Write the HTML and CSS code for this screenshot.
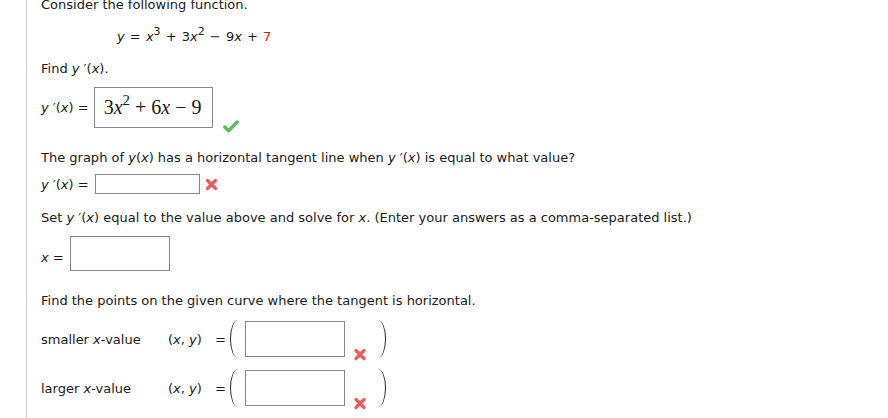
FILE: index.html
```html
<!DOCTYPE html>
<html>
<head>
<meta charset="utf-8">
<link rel="stylesheet" href="styles.css">
</head>
<body>
<div class="page">
  <div class="line l1">Consider the following function.</div>
  <div class="line eq"><i>y</i> = <i>x</i><sup>3</sup> + 3<i>x</i><sup>2</sup> − 9<i>x</i> + <span class="red">7</span></div>
  <div class="line find">Find <i>y</i> ′(<i>x</i>).</div>
  <div class="row deriv">
    <span class="lbl"><i>y</i> ′(<i>x</i>) =</span>
    <span class="answer"><span class="m">3<i>x</i><sup>2</sup><span class="op">+</span>6<i>x</i><span class="op">−</span>9</span></span>
    <svg class="check" width="16" height="13" viewBox="0 0 16 13"><path d="M1.8 7 L5.5 10.8 L14.3 2" fill="none" stroke="#5cb85c" stroke-width="3.4" stroke-linecap="round" stroke-linejoin="round"/></svg>
  </div>
  <div class="line graph">The graph of <i>y</i>(<i>x</i>) has a horizontal tangent line when <i>y</i> ′(<i>x</i>) is equal to what value?</div>
  <div class="row yrow">
    <span class="lbl"><i>y</i> ′(<i>x</i>) =</span>
    <span class="box b1"></span>
    <svg class="xm" width="13" height="13" viewBox="0 0 13 13"><path d="M2.5 2.5 L10.5 10.5 M10.5 2.5 L2.5 10.5" stroke="#ec5a5a" stroke-width="3.2" stroke-linecap="round"/></svg>
  </div>
  <div class="line set">Set <i>y</i> ′(<i>x</i>) equal to the value above and solve for <i>x</i>. (Enter your answers as a comma-separated list.)</div>
  <div class="row xrow">
    <span class="lbl xl"><i>x</i> =</span>
    <span class="box b2"></span>
  </div>
  <div class="line points">Find the points on the given curve where the tangent is horizontal.</div>
  <div class="row pt p1">
    <span class="plbl">smaller <i>x</i>-value</span>
    <span class="xy">(<i>x</i>, <i>y</i>)</span>
    <span class="eqs">=</span>
    <span class="paren lp"></span>
    <span class="box b3"></span>
    <svg class="xm xm2" width="14" height="13" viewBox="0 0 14 13"><path d="M3 2.5 L11 10.5 M11 2.5 L3 10.5" stroke="#ec5a5a" stroke-width="3.2" stroke-linecap="round"/></svg>
    <span class="paren rp"></span>
  </div>
  <div class="row pt p2">
    <span class="plbl">larger <i>x</i>-value</span>
    <span class="xy">(<i>x</i>, <i>y</i>)</span>
    <span class="eqs">=</span>
    <span class="paren lp"></span>
    <span class="box b3"></span>
    <svg class="xm xm2" width="14" height="13" viewBox="0 0 14 13"><path d="M3 2.5 L11 10.5 M11 2.5 L3 10.5" stroke="#ec5a5a" stroke-width="3.2" stroke-linecap="round"/></svg>
    <span class="paren rp"></span>
  </div>
</div>
</body>
</html>
```
FILE: styles.css
```css
html, body {
  margin: 0;
  padding: 0;
  background: #fff;
  overflow: hidden;
}
body {
  font-family: "DejaVu Sans", Verdana, sans-serif;
  font-size: 13px;
  color: #1a1a1a;
}
.page {
  margin-left: 26px;
  border-left: 1px solid #cccccc;
  padding-left: 14px;
  height: 430px;
  padding-top: 1px;
}
i { font-style: italic; }
sup { font-size: 11px; vertical-align: 0; position: relative; top: -6px; line-height: 0; }
.red { color: #ee1111; }
.line { line-height: 16px; height: 16px; white-space: nowrap; }
.l1 { margin-top: -4px; }
.eq { margin-top: 16px; margin-left: 76px; word-spacing: 1px; }
.find { margin-top: 16px; }
.row { display: flex; align-items: center; white-space: nowrap; }
.deriv { margin-top: 10px; height: 41px; }
.lbl { margin-right: 5px; }
.answer {
  box-sizing: border-box;
  height: 41px;
  width: 119px;
  border: 1px solid #888;
  display: flex;
  align-items: center;
  padding-left: 9px;
  font-family: "Liberation Serif", "Times New Roman", serif;
  font-size: 20px;
}
.answer sup { font-size: 15px; top: -9px; }
.op { margin: 0 5px; }
.check { align-self: flex-end; margin-left: 10px; margin-bottom: -5px; }
.graph { margin-top: 22px; }
.yrow { margin-top: 8px; height: 20px; }
.yrow .lbl { margin-right: 6px; }
.box { box-sizing: border-box; border: 1px solid #888; display: inline-block; background: #fff; }
.b1 { width: 105px; height: 20px; }
.xm { margin-left: 5px; }
.set { margin-top: 16px; }
.xrow { margin-top: 10px; height: 34px; }
.xl { padding-top: 8px; margin-right: 6px; }
.b2 { width: 100px; height: 35px; }
.points { margin-top: 23px; }
.pt { height: 38px; }
.p1 { margin-top: 11px; }
.p2 { margin-top: 11px; }
.plbl { width: 127px; }
.xy { width: 47px; }
.eqs { width: 15px; }
.paren { width: 8px; height: 38px; box-sizing: border-box; }
.lp { border-left: 1.6px solid #222; border-radius: 100% 0 0 100% / 50% 0 0 50%; margin-right: 7px; }
.rp { border-right: 1.6px solid #222; border-radius: 0 100% 100% 0 / 0 50% 50% 0; margin-left: 11px; }
.b3 { width: 100px; height: 36px; }
.xm2 { align-self: flex-end; margin-left: 8px; margin-bottom: -3px; }
```
